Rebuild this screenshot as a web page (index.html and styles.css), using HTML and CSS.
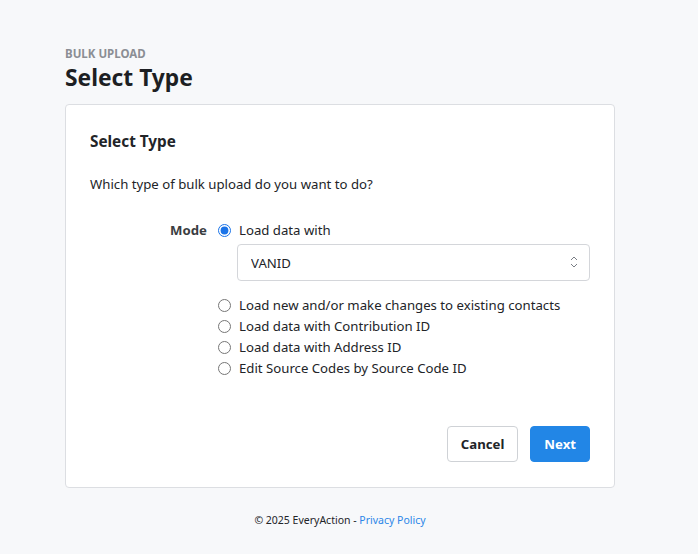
FILE: index.html
```html
<!DOCTYPE html>
<html lang="en">
	<head>
		<meta charset="utf-8">
		<title>Bulk Upload - Select Type</title>
		<link rel="stylesheet" href="styles.css">
	</head>
	<body>

		<div class="page">

			<div class="page-header">
				<div class="eyebrow">BULK UPLOAD</div>
				<h1>Select Type</h1>
			</div>

			<form class="card">

				<h2>Select Type</h2>

				<p class="intro">Which type of bulk upload do you want to do?</p>

				<div class="field">
					<div class="field-label">Mode</div>
					<div class="field-body">

						<label class="option">
							<input type="radio" name="mode" checked>
							<span>Load data with</span>
						</label>

						<div class="select-wrap">
							<select class="select">
								<option>VANID</option>
							</select>
							<!-- up/down chevrons -->
							<svg class="select-arrows" width="8" height="14" viewBox="0 0 8 14">
								<path d="M1 5 L4 2 L7 5" fill="none" stroke="#7a7e85" stroke-width="1"/>
								<path d="M1 9 L4 12 L7 9" fill="none" stroke="#7a7e85" stroke-width="1"/>
							</svg>
						</div>

						<div class="option-list">
							<label class="option">
								<input type="radio" name="mode">
								<span>Load new and/or make changes to existing contacts</span>
							</label>
							<label class="option">
								<input type="radio" name="mode">
								<span>Load data with Contribution ID</span>
							</label>
							<label class="option">
								<input type="radio" name="mode">
								<span>Load data with Address ID</span>
							</label>
							<label class="option">
								<input type="radio" name="mode">
								<span>Edit Source Codes by Source Code ID</span>
							</label>
						</div>

					</div>
				</div>

				<div class="actions">
					<button type="button" class="btn btn-default">Cancel</button>
					<button type="button" class="btn btn-primary">Next</button>
				</div>

			</form>

			<div class="footer">
				&copy; 2025 EveryAction - <a href="#">Privacy Policy</a>
			</div>

		</div>

	</body>
</html>
```

FILE: styles.css
```css
html, body {
	margin: 0;
	background: #f7f8fa;
	font-family: "Noto Sans", "Open Sans", sans-serif;
	color: #222428;
}

.page {
	width: 550px;
	margin: 0 auto;
	padding-top: 46px;
	transform: translateX(-9px);
}

.page-header {
	margin-bottom: 11px;
}

.eyebrow {
	font-size: 11.5px;
	font-weight: 700;
	color: #8b8e94;
	line-height: 16px;
}

h1 {
	margin: 0;
	font-size: 22.8px;
	font-weight: 700;
	line-height: 31px;
	color: #1d1f23;
}

.card {
	background: #ffffff;
	border: 1px solid #dcdee2;
	border-radius: 4px;
	padding: 25px 24px 25px 24px;
}

.card h2 {
	margin: 0;
	font-size: 15.3px;
	font-weight: 700;
	line-height: 22px;
}

.intro {
	margin: 22px 0 0 0;
	font-size: 13.2px;
	line-height: 20px;
}

.field {
	display: flex;
	margin-top: 26px;
}

.field-label {
	width: 117px;
	text-align: right;
	padding-right: 11px;
	font-size: 13.2px;
	font-weight: 700;
	line-height: 20px;
	color: #3a3d42;
}

.field-body {
	flex: 1;
}

.option {
	display: flex;
	align-items: center;
	font-size: 13.2px;
	line-height: 21px;
}

.option input {
	margin: 0 8px 0 0;
	width: 13px;
	height: 13px;
	accent-color: #1a73e8;
}

.select-wrap {
	position: relative;
	margin: 3px 0 14px 19px;
}

.select {
	display: block;
	width: 100%;
	height: 37px;
	padding: 0 13px;
	border: 1px solid #d4d6da;
	border-radius: 4px;
	background: #ffffff;
	font-family: inherit;
	font-size: 13.2px;
	color: #222428;
	appearance: none;
}

.select-arrows {
	position: absolute;
	right: 12px;
	top: 11px;
	pointer-events: none;
}

.actions {
	display: flex;
	justify-content: flex-end;
	gap: 12px;
	margin-top: 47px;
}

.btn {
	height: 36px;
	padding: 0 13px;
	border-radius: 4px;
	font-family: inherit;
	font-size: 13.2px;
	font-weight: 700;
	cursor: pointer;
}

.btn-default {
	background: #ffffff;
	border: 1px solid #cfd2d6;
	color: #222428;
}

.btn-primary {
	background: #2286e6;
	border: 1px solid #2286e6;
	color: #ffffff;
}

.footer {
	margin-top: 25px;
	text-align: center;
	font-size: 10.5px;
	color: #222428;
}

.footer a {
	color: #2b86e8;
	text-decoration: none;
}
```
